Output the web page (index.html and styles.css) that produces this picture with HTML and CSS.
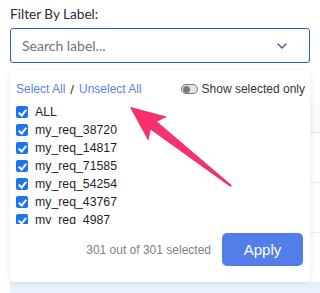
FILE: index.html
```html
<!DOCTYPE html>
<html>
<head>
<meta charset="utf-8">
<link rel="stylesheet" href="styles.css">
</head>
<body>
<div class="page">
  <div class="field-label">Filter By Label:</div>
  <div class="select">
    <div class="select-box">
      <span class="placeholder">Search label...</span>
      <svg class="chevron" width="10" height="6" viewBox="0 0 10 6"><path d="M1 1l4 4 4-4" fill="none" stroke="#4b5a96" stroke-width="1.4" stroke-linecap="round" stroke-linejoin="round"/></svg>
    </div>
    <div class="panel">
      <div class="panel-head">
        <div class="links"><a class="lnk">Select All</a><span class="slash">/</span><a class="lnk">Unselect All</a></div>
        <div class="toggle-wrap"><span class="toggle"><span class="knob"></span></span><span>Show selected only</span></div>
      </div>
      <div class="list">
        <div class="row"><span class="cb"></span>ALL</div>
        <div class="row"><span class="cb"></span>my_req_38720</div>
        <div class="row"><span class="cb"></span>my_req_14817</div>
        <div class="row"><span class="cb"></span>my_req_71585</div>
        <div class="row"><span class="cb"></span>my_req_54254</div>
        <div class="row"><span class="cb"></span>my_req_43767</div>
        <div class="row"><span class="cb"></span>my_req_4987</div>
      </div>
      <div class="panel-foot">
        <span class="count">301 out of 301 selected</span>
        <button class="apply">Apply</button>
      </div>
    </div>
  </div>
  <div class="table">
    <div class="thead"></div>
    <div class="trow"></div>
    <div class="trow"></div>
    <div class="trow"></div>
    <div class="trow sel"></div>
  </div>
</div>
<svg class="arrow" width="320" height="293" viewBox="0 0 320 293">
  <polygon points="130,107 166.9,116.8 156.8,121.6 231.6,185.2 230.4,186.8 150.6,129.4 148.3,140.4" fill="#f8306c"/>
</svg>
</body>
</html>
```
FILE: styles.css
```css
html, body { margin: 0; padding: 0; background: #fff; }
body { width: 320px; height: 293px; overflow: hidden; position: relative; font-family: "Liberation Sans", Arial, sans-serif; }
.page { padding-left: 10px; }
.field-label { font-family: "Lato", sans-serif; font-size: 13.6px; line-height: 20px; padding-top: 4px; color: #2b2b3b; }
.select { position: relative; width: 300px; margin-top: 4px; }
.select-box { box-sizing: border-box; height: 35px; border: 1px solid #2a5bd7; border-radius: 3px; display: flex; align-items: center; justify-content: space-between; padding: 0 22px 0 11px; }
.placeholder { font-family: "Lato", sans-serif; font-size: 14px; color: #6f7480; }
.chevron { display: block; margin-top: 1px; }
.panel { position: absolute; z-index: 2; top: 42px; left: 0; width: 300px; height: 212px; box-sizing: border-box; background: #fff; border-radius: 4px; box-shadow: 0 1px 6px rgba(0,0,0,0.09); padding: 12px 5px 9px 6px; display: flex; flex-direction: column; }
.panel-head { display: flex; justify-content: space-between; align-items: center; height: 14px; font-size: 12px; }
.links { display: flex; align-items: center; }
.lnk { color: #5a7fe3; }
.slash { color: #333; margin: 0 5px; font-size: 13px; }
.toggle-wrap { display: flex; align-items: center; gap: 4px; color: #34343c; }
.toggle { box-sizing: border-box; width: 17px; height: 10px; border: 1px solid #7a7a7a; border-radius: 5px; background: #e4e4e6; display: flex; align-items: center; padding-left: 1px; }
.knob { width: 7px; height: 7px; border-radius: 50%; background: #7a7a7a; }
.list { margin-top: 7px; height: 121px; overflow: hidden; }
.row { height: 18px; display: flex; align-items: center; font-size: 12.3px; color: #1f1f2c; }
.cb { width: 12px; height: 12px; border-radius: 2px; background: #1b74f0; margin-right: 7px; flex: none; position: relative; }
.cb::after { content: ""; position: absolute; left: 3.5px; top: 1.5px; width: 3px; height: 6px; border: solid #fff; border-width: 0 2px 2px 0; transform: rotate(40deg); }
.panel-foot { margin-top: 9px; display: flex; justify-content: flex-end; align-items: center; gap: 11px; padding-right: 2px; }
.count { font-size: 12px; color: #808088; }
.apply { width: 81px; height: 33px; border: none; border-radius: 5px; background: #537de8; color: #fff; font-family: "Liberation Sans", Arial, sans-serif; font-size: 15px; }
.table { margin-top: 40px; }
.thead { height: 29px; background: #f8f9fc; border-bottom: 1px solid #e6e8ee; }
.trow { height: 49px; border-bottom: 1px solid #ececf0; }
.trow.sel { height: 10px; background: #e8f2fd; border: none; }
.arrow { position: absolute; left: 0; top: 0; z-index: 5; filter: drop-shadow(0 0 0.6px rgba(60,60,60,0.6)); }
```
